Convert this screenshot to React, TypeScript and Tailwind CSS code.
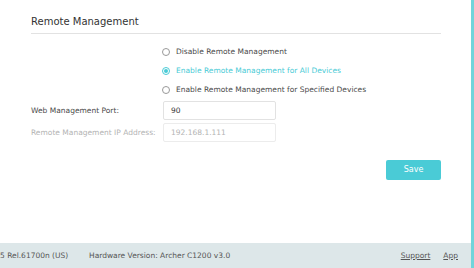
const font = { fontFamily: '"DejaVu Sans", Verdana, sans-serif' };

function Radio({ label, checked }: { label: string; checked?: boolean }) {
  return (
    <label className={`flex items-center gap-[6px] h-[19px] text-[7.5px] whitespace-nowrap ${checked ? "text-[#4acbd6]" : "text-[#4a4a4a]"}`}>
      <span className={`w-[8px] h-[8px] rounded-full border flex items-center justify-center ${checked ? "border-[#4acbd6]" : "border-[#999]"}`}>
        {checked && <span className="w-[4px] h-[4px] rounded-full bg-[#4acbd6]" />}
      </span>
      {label}
    </label>
  );
}

export default function App() {
  return (
    <div className="w-[474px] h-[268px] bg-white flex overflow-hidden" style={font}>
      <div className="flex-1 flex flex-col">
        <div className="flex-1 pl-[31px] pr-[30px] pt-[14px]">
          <h2 className="text-[10px] text-[#333] leading-[16px] pb-[3px] border-b border-[#e2e2e2]">Remote Management</h2>
          <div className="pl-[131px] pt-[8px] flex flex-col">
            <Radio label="Disable Remote Management" />
            <Radio label="Enable Remote Management for All Devices" checked />
            <Radio label="Enable Remote Management for Specified Devices" />
          </div>
          <div className="flex flex-col gap-[3px] mt-[2px]">
            <div className="flex items-center">
              <span className="w-[132px] text-[7.5px] text-[#4a4a4a] whitespace-nowrap">Web Management Port:</span>
              <div className="w-[113px] h-[19px] border border-[#e2e2e2] rounded-[2px] flex items-center px-[7px] text-[7.5px] text-[#333]">90</div>
            </div>
            <div className="flex items-center">
              <span className="w-[132px] text-[7.5px] text-[#b3b3b3] whitespace-nowrap">Remote Management IP Address:</span>
              <div className="w-[113px] h-[19px] border border-[#ececec] rounded-[2px] flex items-center px-[7px] text-[7.5px] text-[#b3b3b3]">192.168.1.111</div>
            </div>
          </div>
          <div className="flex justify-end mt-[18px]">
            <button className="w-[55px] h-[20px] rounded-[2px] bg-[#4acbd6] text-white text-[8px]">Save</button>
          </div>
        </div>
        <div className="h-[25px] bg-[#dde7e9] flex items-center text-[7.5px] text-[#555] whitespace-nowrap">
          <span className="w-[89px]">5 Rel.61700n (US)</span>
          <span>Hardware Version: Archer C1200 v3.0</span>
          <span className="ml-auto underline mr-[13px]">Support</span>
          <span className="underline mr-[13px]">App</span>
        </div>
      </div>
      <div className="w-[3px] bg-[#72d4da]" />
    </div>
  );
}
